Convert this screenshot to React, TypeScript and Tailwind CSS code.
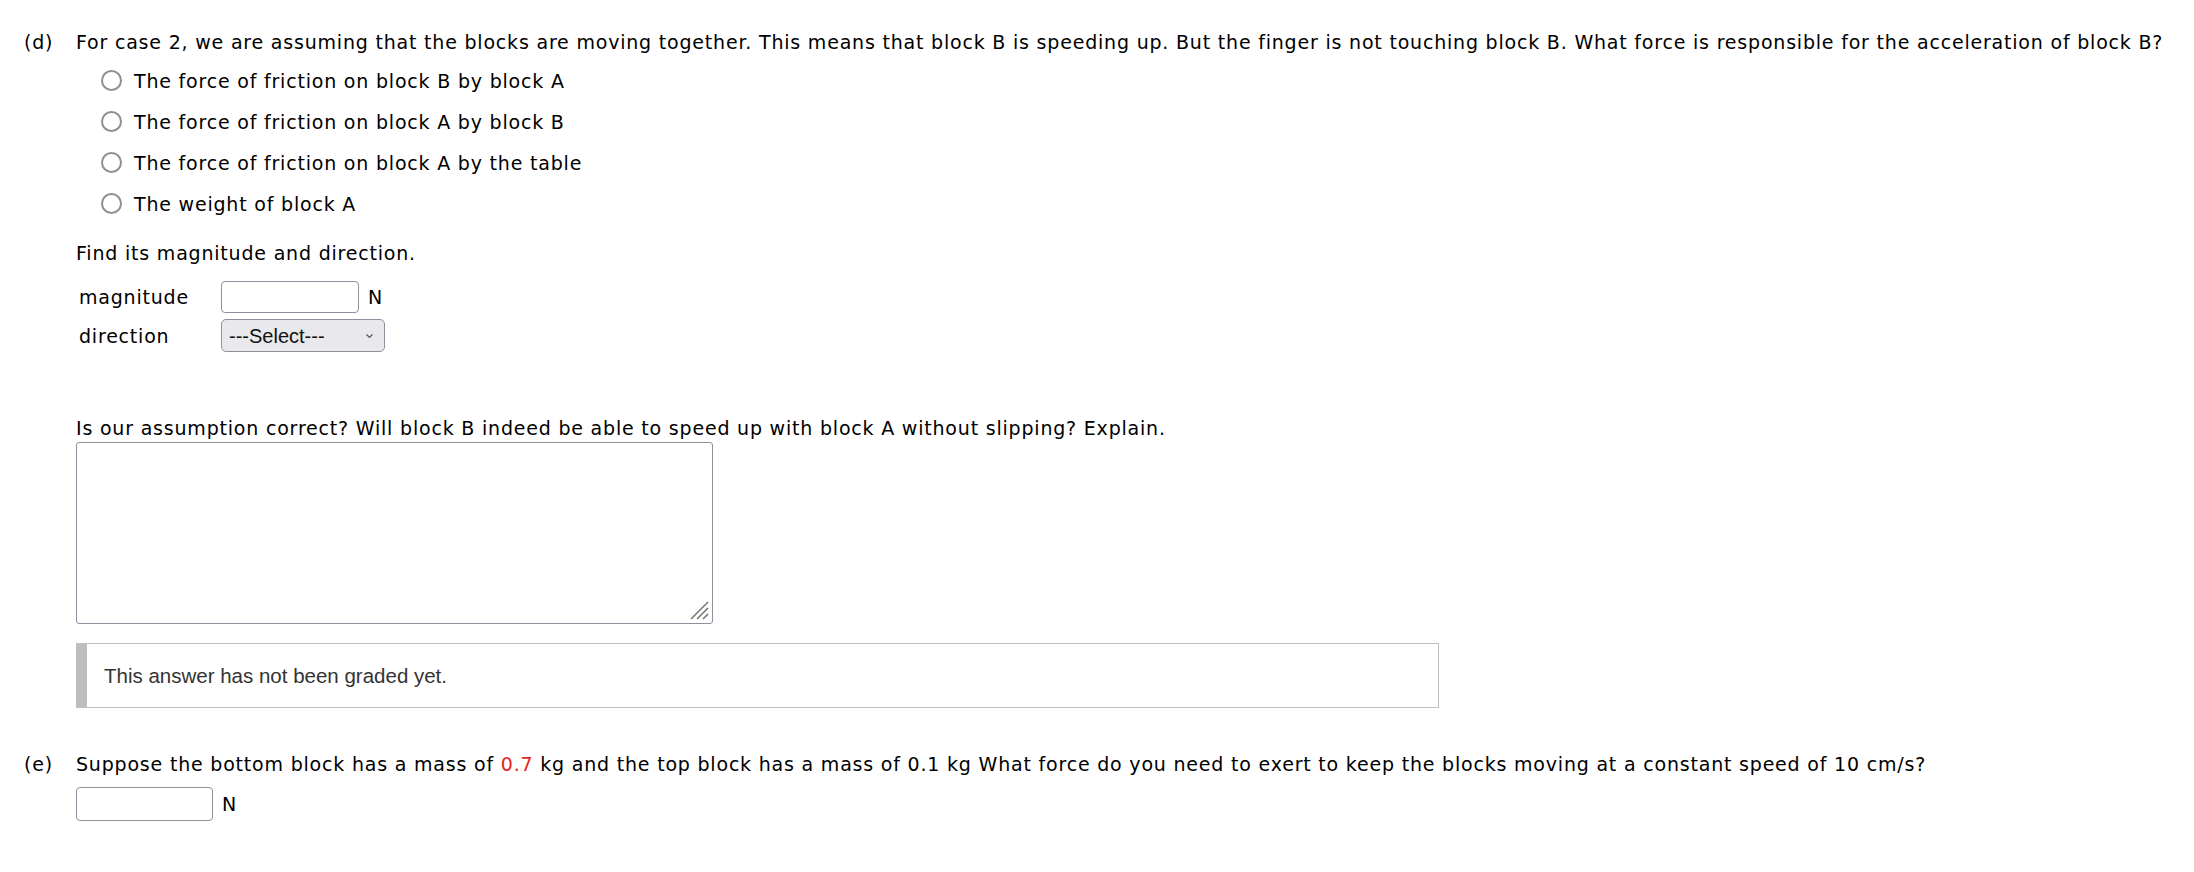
const OPTIONS = [
  'The force of friction on block B by block A',
  'The force of friction on block A by block B',
  'The force of friction on block A by the table',
  'The weight of block A',
];

function Radio() {
  return <span className="inline-block w-[21px] h-[21px] rounded-full border-[2px] border-[#8e8e93] bg-white shrink-0" />;
}

export default function App() {
  return (
    <div className="min-h-screen bg-white text-black font-['DejaVu_Sans',sans-serif] text-[19px] leading-[24px] tracking-[0.8px] pl-[24px] pt-[30px]">
      {/* part d */}
      <div className="flex">
        <div className="w-[52px] shrink-0">(d)</div>
        <div className="flex-1">
          <p>
            For case 2, we are assuming that the blocks are moving together. This means that block B is speeding up. But the finger is not touching block B. What force is responsible for the acceleration of block B?
          </p>

          <div className="mt-[6px] pl-[25px]">
            {OPTIONS.map(o => (
              <label key={o} className="h-[41px] flex items-center gap-[12px]">
                <Radio />
                <span>{o}</span>
              </label>
            ))}
          </div>

          <p className="mt-[17px]">Find its magnitude and direction.</p>

          <div className="mt-[16px] pl-[3px] flex items-center h-[32px]">
            <span className="w-[142px]">magnitude</span>
            <span className="w-[138px] h-[32px] border border-[#8f8f9d] rounded-[4px] bg-white" />
            <span className="ml-[9px]">N</span>
          </div>
          <div className="mt-[6px] pl-[3px] flex items-center h-[33px]">
            <span className="w-[142px]">direction</span>
            <span className="w-[164px] h-[33px] border border-[#8f8f9d] rounded-[5px] bg-[#e9e9ed] flex items-center justify-between pl-[7px] pr-[10px] font-['Liberation_Sans',sans-serif] tracking-normal text-[20px] text-[#111]">
              ---Select---
              <svg width="9" height="6" viewBox="0 0 9 6" fill="none" stroke="#555" strokeWidth="1.2">
                <path d="M1.5 1.5 L4.5 4.5 L7.5 1.5" />
              </svg>
            </span>
          </div>

          <p className="mt-[64px]">Is our assumption correct? Will block B indeed be able to speed up with block A without slipping? Explain.</p>
          <div className="mt-[2px] relative w-[637px] h-[182px] border border-[#8f8f9d] rounded-[3px] bg-white">
            <svg className="absolute right-[3px] bottom-[3px]" width="20" height="20" viewBox="0 0 20 20" stroke="#777" strokeWidth="1.6">
              <path d="M19 2 L2 19" />
              <path d="M19 8 L8 19" />
              <path d="M19 14 L14 19" />
            </svg>
          </div>

          <div className="mt-[19px] w-[1363px] h-[65px] border border-[#c0c0c0] flex">
            <div className="w-[10px] bg-[#bdbdbd] shrink-0" />
            <div className="flex items-center pl-[17px] font-['Liberation_Sans',sans-serif] tracking-normal text-[20.5px] text-[#333]">
              This answer has not been graded yet.
            </div>
          </div>
        </div>
      </div>

      {/* part e */}
      <div className="flex mt-[44px]">
        <div className="w-[52px] shrink-0">(e)</div>
        <div className="flex-1">
          <p>
            Suppose the bottom block has a mass of <span className="text-[#e8231a]">0.7</span> kg and the top block has a mass of 0.1 kg What force do you need to exert to keep the blocks moving at a constant speed of 10 cm/s?
          </p>
          <div className="mt-[11px] flex items-center">
            <span className="w-[137px] h-[34px] border border-[#8f8f9d] rounded-[4px] bg-white" />
            <span className="ml-[9px]">N</span>
          </div>
        </div>
      </div>
    </div>
  );
}
